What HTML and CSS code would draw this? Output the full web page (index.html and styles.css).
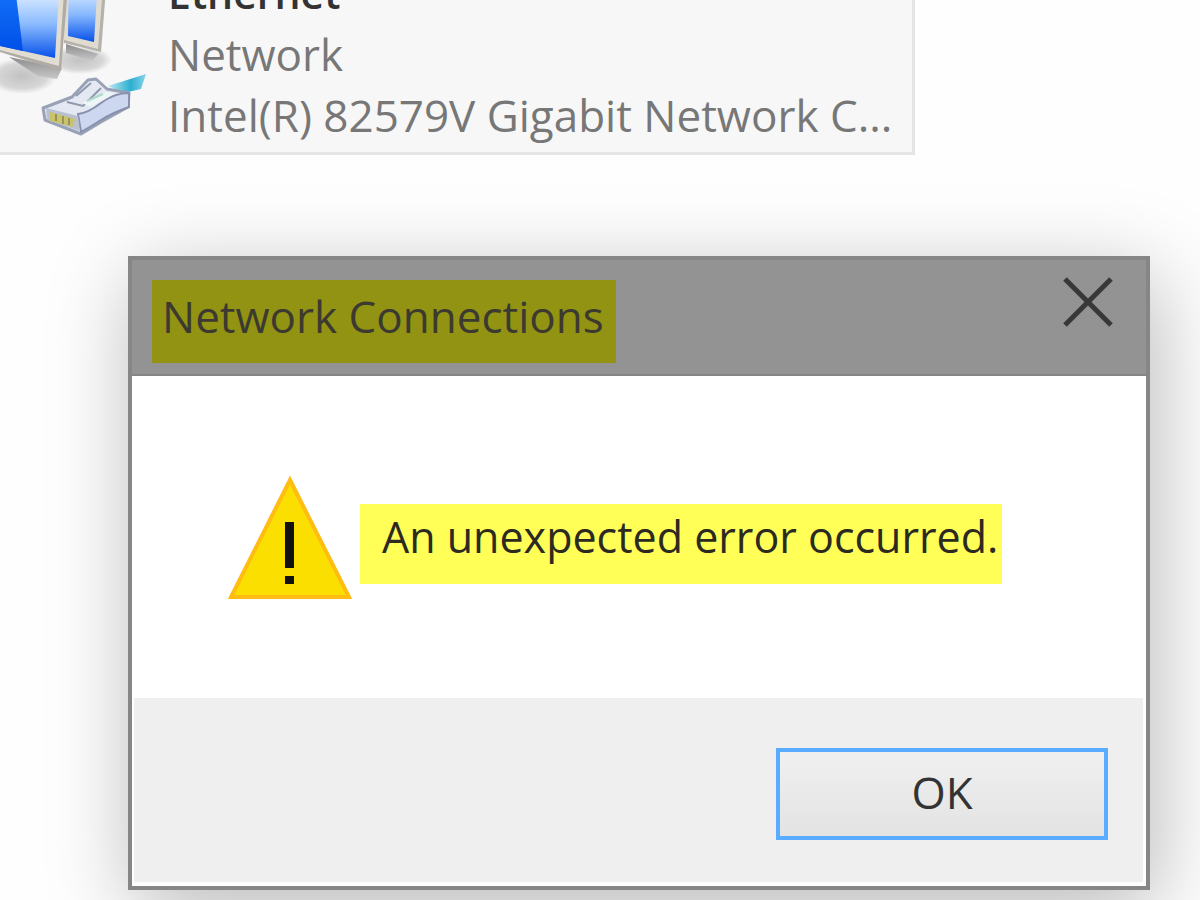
FILE: index.html
```
<!DOCTYPE html>
<html lang="en">
<head>
  <meta charset="utf-8">
  <title>Network Connections</title>
  <meta name="viewport" content="width=device-width, initial-scale=1">
  <link rel="stylesheet" href="styles.css">
</head>
<body>
  <section class="adapter">
    <svg class="adapter-icon" viewBox="0 -37 150 183" aria-hidden="true">
      <defs>
        <linearGradient id="screen" x1="0" y1="0" x2="0" y2="1">
          <stop offset="0.3" stop-color="#e2f0ff"/>
          <stop offset="0.65" stop-color="#88b9ff"/>
          <stop offset="1" stop-color="#0751e8"/>
        </linearGradient>
        <linearGradient id="glare" x1="0" y1="0" x2="0" y2="1">
          <stop offset="0" stop-color="#1c80ff"/>
          <stop offset="1" stop-color="#0050e8"/>
        </linearGradient>
        <radialGradient id="stand">
          <stop offset="0" stop-color="#c2c2c2"/>
          <stop offset="0.7" stop-color="#d6d6d6"/>
          <stop offset="1" stop-color="#f7f7f7"/>
        </radialGradient>
        <linearGradient id="foot" x1="0" y1="0" x2="0" y2="1">
          <stop offset="0" stop-color="#8c8c8c"/>
          <stop offset="1" stop-color="#c8c8c8"/>
        </linearGradient>
        <linearGradient id="cable" x1="0" y1="0" x2="1" y2="0">
          <stop offset="0" stop-color="#bceaf2"/>
          <stop offset="0.6" stop-color="#2eaed0"/>
          <stop offset="1" stop-color="#86d6ea"/>
        </linearGradient>
      </defs>
      <!-- back monitor -->
      <ellipse cx="80" cy="60" rx="32" ry="14" fill="url(#stand)"/>
      <path d="M66 44 98 54 92 61 66 53Z" fill="url(#foot)"/>
      <path d="M64-37H108L101 52 64 43Z" fill="#b5b1ab"/>
      <path d="M64-37H105L98 49 64 40Z" fill="#e0dbd0"/>
      <path d="M69-37H99L94 42 68 36Z" fill="url(#screen)"/>
      <!-- front monitor -->
      <ellipse cx="22" cy="76" rx="35" ry="18" fill="url(#stand)"/>
      <path d="M9 57 62 68 57 79 38 76Z" fill="url(#foot)"/>
      <path d="M0-37H70L61 71 0 52Z" fill="#b0aca5"/>
      <path d="M0-37H66L59 66 0 50Z" fill="#e2ddd2"/>
      <path d="M0-37H61L55 58 0 46Z" fill="url(#screen)"/>
      <path d="M0-37H12L23 51 0 46Z" fill="url(#glare)"/>
      <!-- network plug -->
      <path d="M108 86 146 74 141 89 128 92 116 90Z" fill="url(#cable)"/>
      <path d="M43 108 72 97 88 80 96 79 107 89 129 93 128 107 101 122 81 134 45 120Z" fill="#e3e8f2" stroke="#99a1b6" stroke-width="3" stroke-linejoin="round"/>
      <path d="M78 114Q88 113 101 103T129 93V107Q112 113 101 120T81 132Z" fill="#cdd7f0" stroke="#8790ad" stroke-width="2"/>
      <path d="M46 108 78 116 80 131 47 120Z" fill="#b9c0cf"/>
      <path d="M50 112 75 119 73 127 50 121Z" fill="#c9c36c"/>
      <path d="M56 114V121M63 116V124M69 118V125" stroke="#989358" stroke-width="2"/>
      <path d="M67 102 83 106 101 88M76 96 91 83" fill="none" stroke="#9098ad" stroke-width="2"/>
      <path d="M82 103 106 92 116 93 91 107Z" fill="#edf5f6"/>
      <path d="M87 101 103 94" stroke="#aad9c9" stroke-width="2"/>
    </svg>
    <div class="adapter-text">
      <h2 class="adapter-name">Ethernet</h2>
      <p>Network</p>
      <p>Intel(R) 82579V Gigabit Network C...</p>
    </div>
  </section>

  <main class="dialog" role="alertdialog" aria-labelledby="dialog-title" aria-describedby="dialog-message">
    <header class="dialog-title">
      <h1 id="dialog-title">Network Connections</h1>
      <button type="button" class="close" aria-label="Close">
        <svg viewBox="0 0 50 50" aria-hidden="true">
          <path d="M2 2 48 48M48 2 2 48"/>
        </svg>
      </button>
    </header>
    <div class="dialog-body">
      <svg class="warning" viewBox="0 0 124 124" aria-hidden="true">
        <path d="M62 4 121 121H3Z" fill="#fbdf00" stroke="#ffbc12" stroke-width="4"/>
        <path d="M57 46H66V92H57ZM57 100H66V108H57Z" fill="#111"/>
      </svg>
      <p id="dialog-message" class="message">An unexpected error occurred.</p>
    </div>
    <footer class="dialog-actions">
      <button type="button" class="ok">OK</button>
    </footer>
  </main>
</body>
</html>
```
FILE: styles.css
```
* {
  box-sizing: border-box;
}
body {
  margin: 0;
  background-color: #fefefe;
  font-family: "Open Sans", "Noto Sans", sans-serif;
  font-size: 44px;
  line-height: 61px;
  overflow: hidden;
}
h1, h2, p {
  margin: 0;
  font-size: inherit;
  font-weight: normal;
  white-space: nowrap;
}
button {
  font: inherit;
  cursor: pointer;
}

/* adapter tile, scrolled partly out of view */
.adapter {
  display: flex;
  gap: 18px;
  width: fit-content;
  margin-top: -37px;
  padding: 0 20px 6px 0;
  background-color: #f7f7f7;
  border: solid #e5e5e5;
  border-width: 0 3px 3px 0;
  color: #777;
}
.adapter-icon {
  flex: none;
  width: 150px;
  height: 183px;
}
.adapter .adapter-name {
  color: #333;
  font-size: 41px;
  font-weight: 600;
}

.dialog {
  margin: 101px 50px 10px 128px;
  background-color: #fff;
  border: 4px solid #868686;
  box-shadow: 6px 20px 80px rgba(0, 0, 0, .28);
}
.dialog-title {
  display: flex;
  justify-content: space-between;
  align-items: flex-start;
  padding: 20px 33px 11px 20px;
  background-color: #939393;
  border-bottom: 2px solid #858585;
}
.dialog-title h1 {
  padding: 6px 12px 16px 10px;
  background-color: #929312;
  color: #3c3a30;
}
.close {
  width: 50px;
  height: 50px;
  margin-top: -3px;
  padding: 0;
  border: none;
  background: none;
}
.close svg {
  display: block;
}
.close path {
  stroke: #383838;
  stroke-width: 5;
}
.dialog-body {
  display: flex;
  align-items: center;
  gap: 8px;
  padding: 100px 96px 98px;
}
.warning {
  flex: none;
  width: 124px;
  height: 124px;
}
.message {
  margin-top: 12px;
  padding: 2px 4px 17px 22px;
  background-color: #ffff57;
  color: #2c2a20;
  font-size: 43px;
}
.dialog-actions {
  display: flex;
  justify-content: flex-end;
  margin: 0 3px 4px 2px;
  padding: 50px 35px 42px;
  background-color: #efefef;
}
.ok {
  width: 332px;
  height: 92px;
  padding: 0 0 4px;
  border: 4px solid #59acff;
  background: linear-gradient(#f0f0f0, #e3e3e3);
  color: #333;
}
```
